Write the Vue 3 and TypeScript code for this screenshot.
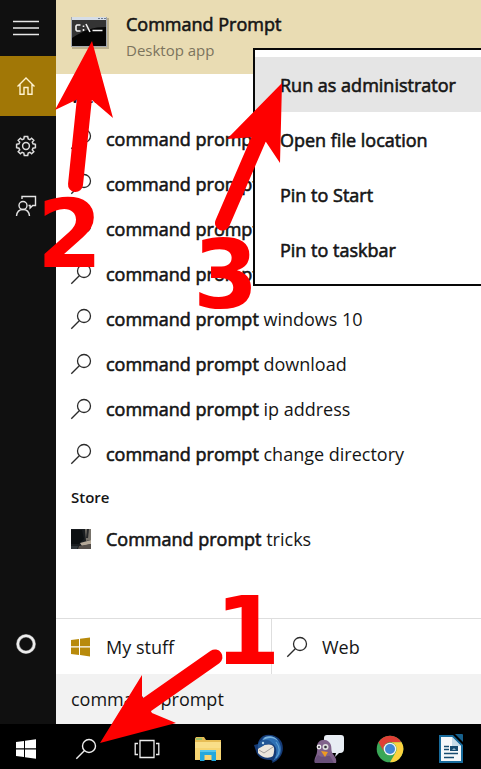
<script setup lang="ts">
import { ref } from 'vue'

interface Suggestion {
  id: number
  match: string
  rest: string
}

const query = ref<string>('command prompt')

const suggestions: Suggestion[] = [
  '', '', '', '', 'windows 10', 'download', 'ip address', 'change directory',
].map((rest, id) => ({ id, match: 'command prompt', rest }))

const menuItems: string[] = [
  'Run as administrator',
  'Open file location',
  'Pin to Start',
  'Pin to taskbar',
]
</script>

<template>
  <div class="desktop">
    <div class="start">
      <nav class="rail" aria-label="Search navigation">
        <button class="rail-btn menu-btn" aria-label="Menu">
          <svg width="26" height="16" viewBox="0 0 26 16"><path d="M0 1.500h26M0 8h26M0 14.500h26" stroke="#e8e8e8" stroke-width="1.300" /></svg>
        </button>
        <button class="rail-btn active" aria-label="Home">
          <svg width="20" height="20" viewBox="0 0 20 20" fill="none" stroke="#fff3d0" stroke-width="1.400"><path d="M1.500 10.500 10 2l8.500 8.500M4 8.500v9.700h4v-6.700h4v6.700h4V8.500" /></svg>
        </button>
        <button class="rail-btn" aria-label="Settings">
          <svg width="22" height="22" viewBox="-11 -11 22 22" fill="none" stroke="#dcdcdc" stroke-width="1.500">
            <circle r="3.400" />
            <path d="M-1.700-9.400H1.700L2.200-7 3.900-6.300 5.600-7.800 7.800-5.600 6.300-3.900 7-2.200 9.400-1.700V1.700L7 2.200 6.300 3.900 7.800 5.600 5.600 7.800 3.900 6.300 2.200 7 1.700 9.400H-1.700L-2.200 7-3.900 6.300-5.600 7.800-7.800 5.600-6.300 3.900-7 2.200-9.400 1.700V-1.700L-7-2.200-6.300-3.900-7.800-5.600-5.600-7.800-3.900-6.300-2.200-7Z" />
          </svg>
        </button>
        <button class="rail-btn" aria-label="Feedback">
          <svg width="22" height="22" viewBox="0 0 22 22" fill="none" stroke="#e4e4e4" stroke-width="1.400">
            <circle cx="8" cy="10.500" r="4" />
            <path d="M1.500 21c.4-4 3-6.500 6.500-6.500s6.100 2.500 6.500 6.500M7 4V1.500h13.500v9h-2.800l-2.600 2.600v-2.600h-1.600" />
          </svg>
        </button>
        <button class="rail-btn cortana" aria-label="Cortana">
          <svg width="22" height="22" viewBox="0 0 22 22" fill="none"><circle cx="11" cy="11" r="8.200" stroke="#777" stroke-width="3.600" /><circle cx="11" cy="11" r="8.200" stroke="#eee" stroke-width="2.400" /></svg>
        </button>
      </nav>

      <main class="panel">
        <header class="best">
          <svg class="console" width="40" height="34" viewBox="0 0 40 34">
            <rect x="2" y="2" width="37" height="31" fill="#8d8468" opacity=".5" />
            <rect x="1" y="1" width="36" height="30" fill="#a4a8ae" />
            <rect x="2" y="1" width="34" height="3" fill="#d6dde6" />
            <path d="M28 2.500h2m1 0h2m1 0h2" stroke="#6d7b90" />
            <rect x="2" y="4" width="34" height="26" fill="#050505" />
            <path d="M2 4h34v7C24 11 14 14 2 22Z" fill="#343434" />
            <path d="M10.500 9H7L6 10v4l1 1h3.500M13.500 9.500v1.500m0 2v2M16 8l4 8M22.500 14.500h10" fill="none" stroke="#f2f2f2" stroke-width="1.600" />
          </svg>
          <div class="best-text">
            <strong class="best-title">Command Prompt</strong>
            <span class="best-sub">Desktop app</span>
          </div>
        </header>

        <section class="results">
          <h2 class="group">Web</h2>
          <ul class="list">
            <li v-for="s in suggestions" :key="s.id">
              <a class="row" href="#">
                <svg class="icon" width="22" height="22" viewBox="0 0 22 22" fill="none" stroke="#2b2b2b" stroke-width="1.300"><circle cx="14" cy="8" r="6.500" /><path d="m9.300 12.700-8 8" /></svg>
                <span><b>{{ s.match }}</b> {{ s.rest }}</span>
              </a>
            </li>
          </ul>
          <h2 class="group">Store</h2>
          <ul class="list">
            <li>
              <a class="row" href="#">
                <svg class="icon" width="22" height="22" viewBox="0 0 22 22">
                  <rect x="1" y="1" width="20" height="20" fill="#191d20" />
                  <path d="M15 1h6v11l-5 1Z" fill="#77736b" /><path d="M17 1h2l-1 9h-2Z" fill="#26282a" />
                  <path d="M1 2h11l2 9-5 5H1Z" fill="#0c1012" />
                  <path d="m10 15 11-3v4l-9 2Z" fill="#b5a999" /><path d="m9 18 12-2v5H8Z" fill="#56504b" /><path d="M1 18h7l-1 3H1Z" fill="#30363a" />
                </svg>
                <span><b>Command prompt</b> tricks</span>
              </a>
            </li>
          </ul>
        </section>

        <div class="scopes">
          <button class="scope">
            <svg class="icon" width="22" height="22" viewBox="0 0 22 22" fill="#b88a0b"><path d="M1 4l8-1v7.300H1ZM10 2.800 20 1.500v8.800H10ZM1 11.500h8V19l-8-1ZM10 11.500h10v9l-10-1.400Z" /></svg>
            My stuff
          </button>
          <button class="scope">
            <svg class="icon" width="22" height="22" viewBox="0 0 22 22" fill="none" stroke="#2b2b2b" stroke-width="1.300"><circle cx="14" cy="8" r="6.500" /><path d="m9.300 12.700-8 8" /></svg>
            Web
          </button>
        </div>
        <input v-model="query" class="search" type="text" aria-label="Search" />

        <div class="context" role="menu">
          <button v-for="(item, i) in menuItems" :key="item" role="menuitem" class="context-item" :class="{ hovered: i === 0 }">{{ item }}</button>
        </div>
      </main>
    </div>

    <footer class="taskbar">
      <button class="task start-btn" aria-label="Start">
        <svg width="22" height="22" viewBox="0 0 22 22" fill="#fff"><path d="M1 4l8-1v7.300H1ZM10 2.800 21 1.200v9.100H10ZM1 11.500h8V19l-8-1ZM10 11.500h11v9.300l-11-1.600Z" /></svg>
      </button>
      <button class="task" aria-label="Search">
        <svg width="22" height="22" viewBox="0 0 22 22" fill="none" stroke="#eee" stroke-width="1.400"><circle cx="14" cy="8" r="6.500" /><path d="m9.300 12.700-8 8" /></svg>
      </button>
      <button class="task" aria-label="Task view">
        <svg width="26" height="20" viewBox="0 0 26 20" fill="none" stroke="#eee" stroke-width="1.300"><path d="M6 1.500h14v17H6ZM4 4.500H1.200v11H4M22 4.500h2.800v11H22" /></svg>
      </button>
      <button class="task" aria-label="File Explorer">
        <svg width="28" height="26" viewBox="0 0 28 26">
          <path d="M1 2.500 2 1h8l2 3h15v20H1Z" fill="#e7bd55" /><path d="M1 6h26v17.500H1Z" fill="#f9de88" /><path d="M2 2h6v2H2Z" fill="#9cc06a" /><path d="M1 12h26v11.500H1Z" fill="#f6d573" />
          <path d="M6 14h16v11h-4.500v-6h-7v6H6Z" fill="#22a8dd" /><path d="M6 14h16v2H6Z" fill="#54c6ec" />
        </svg>
      </button>
      <button class="task" aria-label="Thunderbird">
        <svg width="30" height="30" viewBox="0 0 30 30">
          <path d="M9 2C16-1 25 2 28 9c3 9-2 17-10 20 1-2 0-3-2-3C8 26 3 22 2 17L0 11l4-1c0-3 2-6 5-8Z" fill="#153a75" />
          <path d="M9 4c7-4 15-1 17 6 3 8-1 14-7 17 4-5 5-13 0-17-4-3-9-2-13 1Z" fill="#2f70b4" />
          <path d="M11 3c5-2 11 0 13 4-5-4-10-4-16 0Z" fill="#79b2dc" />
          <path d="M22 8c4 5 4 11 0 16" fill="none" stroke="#5b9ed2" stroke-width="1.200" />
          <path d="M4 15c3-4 11-6 15-3 2 2 1 7 0 10-4 3-11 2-15-3Z" fill="#ebe6dd" />
          <path d="m5 16 5 3 9-6" fill="none" stroke="#a39f9d" />
          <path d="M4 14C3 8 7 5 12 6c4 0 6 2 7 5-4-2-8-1-10 1-2 1-3 2-5 2Z" fill="#225796" /><circle cx="9" cy="9" r="1.200" fill="#b7d8ed" />
        </svg>
      </button>
      <button class="task" aria-label="Pidgin">
        <svg width="30" height="28" viewBox="0 0 30 28">
          <path d="M13 0h14q3 0 3 3v11q0 4-4 4h-1l-4 4 1-4h-9q-3 0-3-4V3q0-3 3-3Z" fill="#e8edf4" />
          <path d="M3 13c-1-7 7-11 12-6 4 4 1 8 4 12 2 3 4 5 3 9H1c-2-5 3-7 2-15Z" fill="#80628b" />
          <path d="M4 20c5 4 9 0 12 1l4 7H1c-1-3 1-5 3-8Z" fill="#69507a" /><circle cx="5" cy="12" r="2.400" fill="#eee" /><circle cx="11.500" cy="12" r="3" fill="#ddd" /><circle cx="5" cy="12" r="1" fill="#302c36" /><circle cx="11.500" cy="12" r="1.300" fill="#302c36" />
          <path d="m7 16 7 1-3 5Z" fill="#ee9b21" />
        </svg>
      </button>
      <button class="task" aria-label="Chrome">
        <svg width="28" height="28" viewBox="-14 -14 28 28">
          <circle r="13.300" fill="#3aa757" /><path d="M-11.520-6.650A13.300 13.300 0 0 1 11.520-6.650H0A6.650 6.650 0 0 0-5.760 3.320Z" fill="#df3f35" />
          <path d="M11.520-6.650A13.300 13.300 0 0 1 0 13.300L5.760 3.320A6.650 6.650 0 0 0 0-6.650Z" fill="#fcd23f" />
          <circle r="6.300" fill="#f3f3f3" /><circle r="5" fill="#4087d5" />
        </svg>
      </button>
      <button class="task" aria-label="Writer">
        <svg width="26" height="30" viewBox="0 0 26 30">
          <path d="M1 1h14l10 10v18H1Z" fill="#186b9c" /><path d="M3 3h11l9 9v15H3Z" fill="#f5f8fa" /><path d="M17 0h7q1 0 1 1v7Z" fill="#17608c" /><path d="M14 3v9h9Z" fill="#c6dce8" />
          <path d="M6 12.500h5M6 15.500h5M6 19.500h14M6 23.500h10" stroke="#174c70" stroke-width="1.500" /><rect x="12" y="12" width="8" height="5" fill="#174c70" /><path d="m14 16 2-2 2 2Z" fill="#8fb5c9" />
        </svg>
      </button>
    </footer>

    <div class="steps steps-top">
      <svg width="300" height="310" viewBox="0 0 300 310" fill="#fe0000" aria-hidden="true">
        <path d="M92 41 55 110 77 99.500 92 100 113 118Z" /><path d="M84.500 98 75.500 184.500" stroke="#fe0000" stroke-width="15" stroke-linecap="round" />
        <path d="M282 83 227 139 255 137 266 142 280 163Z" /><path d="M260 136 222.500 223" stroke="#fe0000" stroke-width="15" stroke-linecap="round" />
      </svg>
      <span class="digit two">2</span>
      <span class="digit three">3</span>
    </div>
    <div class="steps steps-bottom">
      <svg width="300" height="189" viewBox="0 580 300 189" fill="#fe0000" aria-hidden="true">
        <path d="M100 743 142 675V696L152 713 176 723Z" /><path d="M145 706 215 657" stroke="#fe0000" stroke-width="15" stroke-linecap="round" />
      </svg>
      <span class="digit one">1</span>
    </div>
  </div>
</template>

<style>
body {
  margin: 0;
}
</style>

<style scoped>
.desktop {
  position: relative;
  display: flex;
  flex-direction: column;
  min-height: 100vh;
  overflow: hidden;
  background: #fff;
  color: #151515;
  font-family: "Open Sans", "Noto Sans", sans-serif;
  font-size: 18px;
  line-height: 24px;
}

button,
input {
  margin: 0;
  border: 0;
  border-radius: 0;
  padding: 0;
  color: inherit;
  background: none;
  font: inherit;
}

svg {
  display: block;
  flex: none;
}

.start {
  display: flex;
  flex: 1;
}

.rail {
  display: flex;
  flex-direction: column;
  flex: none;
  width: 56px;
  background: #101010;
}

.rail-btn {
  display: flex;
  align-items: center;
  justify-content: center;
  height: 60px;
  padding-right: 4px;
}

.menu-btn {
  height: 56px;
}

.active {
  background: #a17706;
}

.cortana {
  margin-top: auto;
  margin-bottom: 50px;
}

.panel {
  position: relative;
  display: flex;
  flex-direction: column;
  flex: 1;
  min-width: 0;
}

.best {
  display: flex;
  align-items: flex-start;
  gap: 16px;
  box-sizing: border-box;
  height: 74px;
  padding: 12px 14px 0;
  background: #e9dcb3;
}

.console {
  margin-top: 4px;
}

.best-text {
  display: flex;
  flex-direction: column;
  gap: 2px;
}

/* A medium weight: the regular face with a thin outline in the text colour. */
.best-title,
.context-item,
b {
  font-weight: 400;
  -webkit-text-stroke: 0.6px currentColor;
}

.best-sub {
  color: #7c745d;
  font-size: 15px;
}

.results {
  flex: 1;
  padding-top: 2px;
}

.group {
  margin: 0;
  padding: 9px 15px 7px;
  font-size: 15px;
  font-weight: 600;
}

.list {
  margin: 0;
  padding: 0;
  list-style: none;
}

.row {
  display: flex;
  align-items: center;
  gap: 14px;
  height: 45px;
  padding-left: 14px;
  color: inherit;
  text-decoration: none;
  white-space: nowrap;
}

.scopes {
  display: grid;
  grid-template-columns: 215px 1fr;
  height: 55px;
  border-top: 1px solid #dedede;
}

.scope {
  display: flex;
  align-items: center;
  gap: 14px;
  padding-left: 14px;
}

.scope + .scope {
  border-left: 1px solid #dedede;
}

.search {
  box-sizing: border-box;
  width: 100%;
  height: 50px;
  padding: 0 15px;
  background: #f2f2f2;
  outline: none;
}

.context {
  position: absolute;
  top: 48px;
  right: 0;
  left: 197px;
  display: flex;
  flex-direction: column;
  border: 2px solid #080808;
  border-right: 0;
  padding: 7px 0;
  background: #fff;
}

.context-item {
  height: 55px;
  padding-left: 25px;
  text-align: left;
  white-space: nowrap;
}

.hovered {
  background: #e5e5e5;
}

.taskbar {
  display: flex;
  height: 45px;
  background: #000;
}

.task {
  display: flex;
  align-items: center;
  justify-content: center;
  flex: 1;
  padding-top: 4px;
}

.start-btn {
  flex: 0 0 56px;
  box-sizing: border-box;
  padding-right: 4px;
}

.steps {
  position: absolute;
  left: 0;
  pointer-events: none;
}

.steps-top {
  top: 0;
}

.steps-bottom {
  bottom: 0;
}

.digit {
  position: absolute;
  color: #fe0000;
  font: bold 94px/94px "DejaVu Sans", sans-serif;
}

.one {
  top: 5px;
  left: 215px;
}

.two {
  top: 188px;
  left: 37px;
}

.three {
  top: 229px;
  left: 193px;
}
</style>
